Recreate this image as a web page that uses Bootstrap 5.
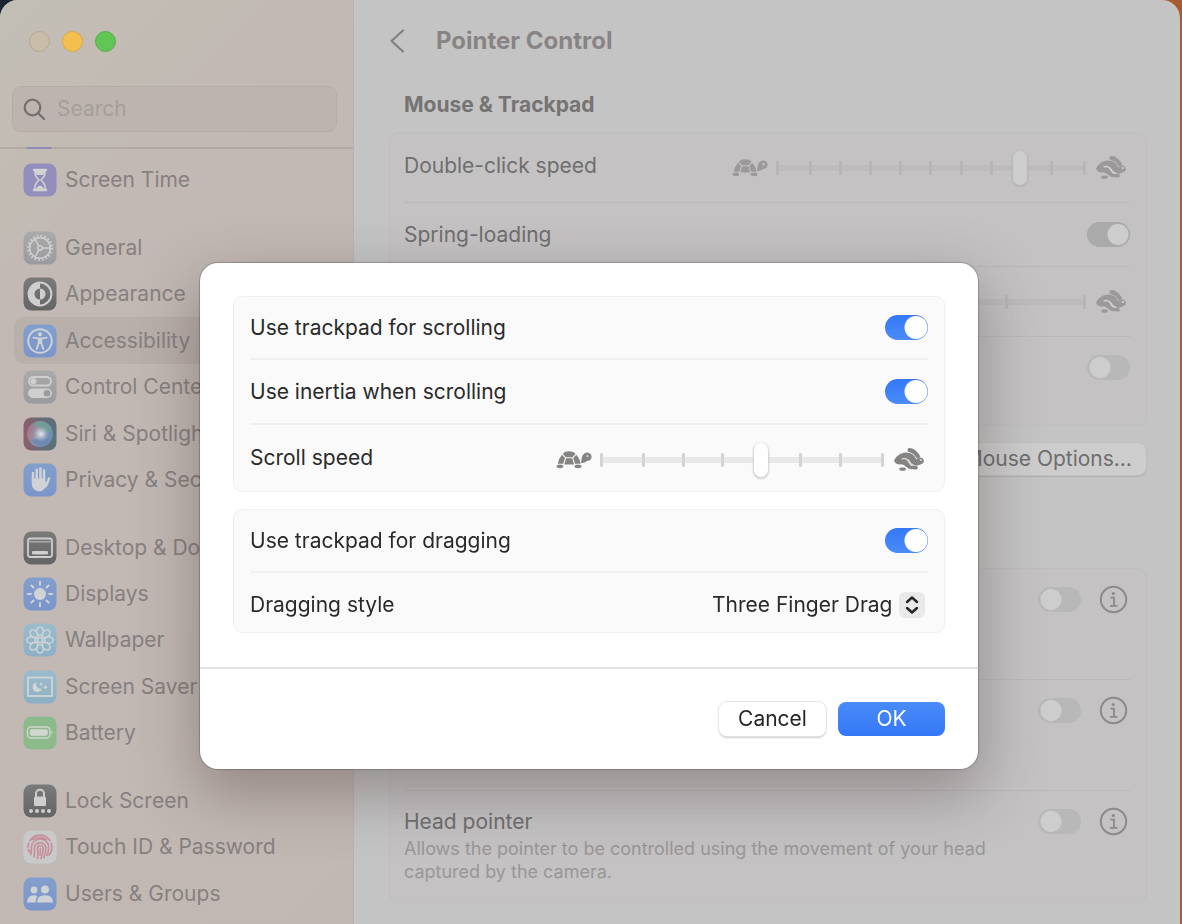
<!DOCTYPE html>
<html lang="en">
<head>
<meta charset="utf-8">
<meta name="viewport" content="width=device-width, initial-scale=1">
<title>Pointer Control</title>
<link href="https://cdn.jsdelivr.net/npm/bootstrap@5.3.0/dist/css/bootstrap.min.css" rel="stylesheet">
<style>
  body { font-family: Inter, "Liberation Sans", sans-serif; font-size: 21px; line-height: 26px; color: #6f6e6e; overflow: hidden; }
  .desktop { background: linear-gradient(90deg, #1c2433 0 40px, #a85a33 40px); }
  .window { height: 100vh; margin-right: 2px; border-radius: 18px 18px 0 0; overflow: hidden; background: #c4c4c4; }

  /* Sidebar */
  .sidebar { width: 30%; min-width: 300px; background: linear-gradient(135deg, #c2beb5 0, #c2bbb4 17%, #c2b9b4 22%, #c2b8b3 100%); border-right: 1px solid #bab2af; color: #868180; }
  .sidebar-head { height: 149px; border-bottom: 2px solid #b4aba8; padding: 31px 16px 15px 12px; }
  .lights { gap: 12px; padding-left: 17px; }
  .light { width: 21px; height: 21px; border-radius: 50%; border: 1px solid #b5a894; padding: 0; }
  .light-off { background: #c9bda9; }
  .light-min { background: #f5bf4f; border-color: #dba944; }
  .light-zoom { background: #62c655; border-color: #57ad4b; }
  .search { height: 46px; border-radius: 9px; border: 1px solid #b6adaa; background: #bdb4b0; padding: 0 10px; gap: 11px; }
  .search svg { width: 23px; height: 23px; flex: none; }
  .search input { background: none; border: 0; outline: 0; color: #6f6e6e; min-width: 0; padding: 0; }
  .search input::placeholder { color: #a69e9c; opacity: 1; }
  .side-list { padding: 8px 14px 7px; min-height: 0; position: relative; }
  .side-list::before { content: ""; position: absolute; left: 26px; top: -2px; width: 26px; height: 2px; border-radius: 0 0 4px 4px; background: #8f8cb8; }
  .side-item { color: inherit; text-decoration: none; gap: 8px; padding-left: 9px; border-radius: 10px; flex: 1 1 0; white-space: nowrap; }
  .side-item:hover { color: inherit; }
  .side-item.active { background: #b9afab; }
  .side-item.group-start { margin-top: 21px; }
  .side-item svg { width: 34px; height: 34px; flex: none; }

  /* Content */
  .content-pane { padding: 26px 33px 0 35px; min-width: 0; }
  .page-head { gap: 31px; height: 30px; }
  .back { border: 0; background: none; padding: 0; color: #858080; display: flex; }
  .page-title { font-size: 24px; line-height: 30px; font-weight: 700; color: #898484; margin: 0; }
  .section-title { font-size: 21px; line-height: 26px; font-weight: 700; color: #757373; margin: 36px 0 14px; padding-left: 15px; }
  .pane-group { background: #c4c2c3; border: 1px solid #c0bebf; border-radius: 10px; padding: 0 16px 0 14px; }
  .pane-row { border-bottom: 1px solid #bab9b9; }
  .pane-row:last-child { border-bottom: 0; }
  .row-speed { height: 70px; }
  .row-plain { height: 64px; }
  .row-tall { height: 88px; padding-top: 18px; }
  .row-note { height: 111px; padding-top: 16px; }
  .row-side { gap: 18px; margin-right: 2px; }
  .row-text { padding-top: 2px; }
  .note { font-size: 18px; line-height: 23px; color: #999797; max-width: 610px; margin-top: 2px; }
  .soft-btn { background: #cdcdcd; border: 1px solid #c0c0c0; border-radius: 9px; height: 34px; padding: 0 14px; line-height: 30px; color: #6f6e6e; box-shadow: 0 1px 1px #b0b0b0; margin: 16px 0 92px; }
  .info { border: 0; background: none; padding: 0; width: 29px; height: 29px; display: flex; color: #8b8989; }

  /* Switch */
  .form-check-input.toggle { width: 43px; height: 25px; margin: 0; border: 0; border-radius: 13px; flex: none; background: #b9b8b8 radial-gradient(circle at 13px 50%, #cdcdcd 10px, transparent 11px); box-shadow: none; }
  .form-check-input.toggle:checked { background: #aaa radial-gradient(circle at 31px 50%, #cdcdcd 10px, transparent 11px); }
  .modal .form-check-input.toggle:checked { background: radial-gradient(circle at 31px 50%, #fff 11px, transparent 12px), linear-gradient(#3478f6, #4a8cf8); }

  /* Speed slider */
  .speed { color: #9b9999; --tick: #b7b6b6; --track: #bdbbbc; --thumb: #cdcdcd; --edge: #b5b5b5; gap: 8px; }
  .modal .speed { color: #858483; --tick: #d4d4d4; --track: #e9e9e9; --thumb: #fff; --edge: #cfcfcf; }
  .rail { position: relative; width: 310px; height: 36px; }
  .modal .rail { width: 284px; }
  .ticks { position: absolute; inset: 11px 0; display: flex; justify-content: space-between; background: linear-gradient(var(--track), var(--track)) center / 100% 6px no-repeat; }
  .ticks i { width: 3px; border-radius: 1px; background: var(--tick); }
  .ticks i:first-child { margin-right: 3px; }
  .ticks i:last-child { margin-left: 3px; }
  .rail input { position: absolute; inset: 0; width: 100%; height: 100%; margin: 0; appearance: none; -webkit-appearance: none; background: none; }
  .rail input::-webkit-slider-thumb { -webkit-appearance: none; width: 14px; height: 34px; border-radius: 7px; background: var(--thumb); box-shadow: 0 1px 2px 1px var(--edge); }
  .critter { width: 36px; height: 26px; flex: none; }

  /* Dialog */
  .modal { padding-right: 4px; overflow: hidden; }
  .sheet { max-width: 778px; margin: 263px auto 0; }
  .modal .modal-content { border: 0; border-radius: 18px; color: #2a2a2a; box-shadow: 0 0 1px 1px rgba(0,0,0,.2), 0 22px 60px 4px rgba(60,40,40,.34); }
  .sheet-body { padding: 33px 33px 34px; gap: 17px; }
  .sheet-group { background: #fafafa; border: 1px solid #f0f0f0; border-radius: 9px; padding: 0 16px; }
  .sheet-row { height: 65px; border-bottom: 2px solid #f0f0f0; }
  .sheet-row:first-child { height: 63px; }
  .sheet-row:last-child { border-bottom: 0; height: 66px; }
  .sheet-row.tail:last-child { height: 59px; padding-top: 5px; }
  .sheet-foot { border-top: 2px solid #e4e4e4; padding: 33px; gap: 12px; }
  .sheet-foot button { width: 107px; height: 34px; border-radius: 8px; padding: 0; line-height: 26px; font-size: 21px; border: 0; }
  .btn-plain, .btn-plain:hover { background: #fff; color: #252525; box-shadow: 0 0 1px 1px #e4e4e4, 0 2px 2px #ccc; }
  .btn-main, .btn-main:hover { background: linear-gradient(#4a8cf8, #3377f7); color: #fff; }
  .picker { position: relative; margin-right: 3px; }
  .picker select { appearance: none; -webkit-appearance: none; border: 0; background: none; color: inherit; padding: 0 32px 0 0; }
  .picker svg { position: absolute; right: 0; top: 0; width: 26px; height: 26px; pointer-events: none; }
</style>
</head>
<body>
<!-- Shared icon shapes -->
<svg width="0" height="0" class="position-absolute" aria-hidden="true">
  <defs>
    <linearGradient id="gBlue" x2="0" y2="1"><stop stop-color="#829fcc"/><stop offset="1" stop-color="#7b95ca"/></linearGradient>
    <linearGradient id="gGrey" x2="0" y2="1"><stop stop-color="#aaaaaa"/><stop offset="1" stop-color="#9a9b9d"/></linearGradient>
    <linearGradient id="gDark" x2="0" y2="1"><stop stop-color="#7a7b79"/><stop offset="1" stop-color="#646464"/></linearGradient>
    <linearGradient id="gCyan" x2="0" y2="1"><stop stop-color="#9bbccb"/><stop offset="1" stop-color="#8cb0c4"/></linearGradient>
    <linearGradient id="gSiri"><stop stop-color="#8f5f6c"/><stop offset=".5" stop-color="#666977"/><stop offset="1" stop-color="#597376"/></linearGradient>
    <linearGradient id="gOrb" x2="1" y2=".4"><stop stop-color="#b0687a"/><stop offset=".5" stop-color="#8f96a8"/><stop offset="1" stop-color="#6a8cb5"/></linearGradient>
    <radialGradient id="gGlow"><stop stop-color="#e4e9ee"/><stop offset="1" stop-color="#c0c8d8" stop-opacity="0"/></radialGradient>
    <symbol id="turtle" viewBox="0 0 36 26"><g fill="currentColor"><path d="M6.800 7Q8.500 4.200 13 4.200Q17.800 4.200 19.500 7L16.500 10.200H9.800Z"/><path d="M6 7.800L9 11L7.300 16.800H1.800Q2.800 11 6 7.800ZM20.300 7.800Q23.500 11 24.700 16.800H19L17.300 11Z"/><path d="M10 11.200H16.300L18 17.500H8.300Z"/><path d="M25 15.800L25.800 10.500Q27 6 31 5.600Q35.600 6 35.600 10.300Q35 13.900 31 13.900Q28 16.500 25 15.800Z"/><ellipse cx="4" cy="19.300" rx="3.300" ry="1.900"/><ellipse cx="22" cy="19.300" rx="3.500" ry="1.900"/></g><circle cx="31.500" cy="9.200" r="1.100" fill="#d0d0d0"/></symbol>
    <symbol id="rabbit" viewBox="0 0 36 26"><g fill="none" stroke="currentColor" stroke-linecap="round" stroke-linejoin="round"><path d="M17.500 3.200Q22 3.500 26 9.500" stroke-width="4.200"/><path d="M7.500 13Q10 8.800 14.500 8.800Q19 8.800 21 13T28.500 14" stroke-width="6.500"/><path d="M14.500 17.500L18 20.300L24 20.800" stroke-width="3.600"/><path d="M9 22.100H12.200" stroke-width="3.400"/></g><path d="M2 13.500Q4 9 9 6.500L15 12.500L19 19.500L14.500 20Q11.500 16.500 7 17.500Q3 17 2 13.500Z" fill="currentColor"/><path d="M10 11.800Q14.500 10.600 16.200 14T21.500 18.200" fill="none" stroke="#d4d4d4" stroke-width="1.300" stroke-linecap="round"/><circle cx="28.800" cy="13" r="1.100" fill="#d4d4d4"/></symbol>
    <symbol id="info" viewBox="0 0 29 29"><circle cx="14.500" cy="14.500" r="12.700" fill="none" stroke="currentColor" stroke-width="2"/><circle cx="14.300" cy="8.500" r="1.600" fill="currentColor"/><path d="M11.500 12.600H15V20.500M11 20.800H18.500" fill="none" stroke="currentColor" stroke-width="1.800"/></symbol>
    <ellipse id="petal" cx="17" cy="8.300" rx="3.300" ry="4.300"/>
    <path id="ray" d="M17 4.800V7.800"/>
  </defs>
</svg>

<div class="desktop">
<div class="window d-flex">
  <aside class="sidebar d-flex flex-column flex-shrink-0">
    <div class="sidebar-head d-flex flex-column justify-content-between">
      <div class="lights d-flex">
        <button class="light light-off" aria-label="Close"></button>
        <button class="light light-min" aria-label="Minimise"></button>
        <button class="light light-zoom" aria-label="Zoom"></button>
      </div>
      <label class="search d-flex align-items-center">
        <svg viewBox="0 0 23 23" fill="none" stroke="#747070" stroke-width="2.300" stroke-linecap="round"><circle cx="9.500" cy="9.500" r="7.800"/><path d="M15.300 15.300L21 21"/></svg>
        <input type="text" placeholder="Search" aria-label="Search">
      </label>
    </div>
    <nav class="side-list d-flex flex-column flex-grow-1">
      <a href="#" class="side-item d-flex align-items-center">
        <svg viewBox="0 0 34 34"><rect x=".5" y=".5" width="33" height="33" rx="8" fill="#928fbd"/><path d="M11 7H23M11 27H23" stroke="#d2d2d2" stroke-width="2.400" stroke-linecap="round"/><path d="M12 7V10.500Q12 13 16 17Q12 21 12 23.500V27H22V23.500Q22 21 18 17Q22 13 22 10.500V7Z" fill="none" stroke="#d2d2d2" stroke-width="1.500"/><path d="M12 6H22V10L20 12H14L12 10ZM13 26.500Q14 23 17 22.500Q20 23 21 26.500Z" fill="#d2d2d2"/></svg>Screen Time</a>

      <a href="#" class="side-item group-start d-flex align-items-center">
        <svg viewBox="0 0 34 34"><rect x=".5" y=".5" width="33" height="33" rx="8" fill="url(#gGrey)"/><g fill="none" stroke="#cfcfcf" stroke-width="1.500"><circle cx="17" cy="17" r="10.300"/><circle cx="17" cy="17" r="2.200"/><path d="M19.200 17H27M15.900 15.100L12 8.300M15.900 18.900L12 25.700"/><circle cx="17" cy="17" r="12" stroke-width="2" stroke-dasharray="1.770 2"/></g></svg>General</a>
      <a href="#" class="side-item d-flex align-items-center">
        <svg viewBox="0 0 34 34"><rect x=".5" y=".5" width="33" height="33" rx="8" fill="url(#gDark)"/><circle cx="17" cy="17" r="11.400" fill="none" stroke="#cfcfcf" stroke-width="2"/><path d="M17 6A11 11 0 0 0 17 28V22.500A5.500 5.500 0 0 1 17 11.500Z" fill="#cfcfcf"/><path d="M17 11.500A5.500 5.500 0 0 1 17 22.500Z" fill="#cfcfcf"/></svg>Appearance</a>
      <a href="#" class="side-item active d-flex align-items-center" aria-current="page">
        <svg viewBox="0 0 34 34"><rect x=".5" y=".5" width="33" height="33" rx="8" fill="url(#gBlue)"/><circle cx="17" cy="17" r="11.800" fill="none" stroke="#cfd2d6" stroke-width="1.900"/><circle cx="17" cy="10.300" r="2" fill="#cfd2d6"/><path d="M10.500 13.600L15 14.400H19L23.500 13.600M17 14.500V19M15.700 15V19L13.700 25M18.300 15V19L20.300 25" fill="none" stroke="#cfd2d6" stroke-width="1.900" stroke-linecap="round" stroke-linejoin="round"/></svg>Accessibility</a>
      <a href="#" class="side-item d-flex align-items-center">
        <svg viewBox="0 0 34 34"><rect x=".5" y=".5" width="33" height="33" rx="8" fill="url(#gGrey)"/><rect x="6" y="7" width="22" height="8.500" rx="4.250" fill="none" stroke="#cfcfcf" stroke-width="1.800"/><circle cx="10.500" cy="11.200" r="3" fill="#cfcfcf"/><rect x="5" y="18.500" width="24" height="9.500" rx="4.750" fill="#cfcfcf"/><circle cx="24" cy="23.200" r="3.300" fill="#9b9b9c"/></svg>Control Center</a>
      <a href="#" class="side-item d-flex align-items-center">
        <svg viewBox="0 0 34 34"><rect x=".5" y=".5" width="33" height="33" rx="8" fill="url(#gSiri)"/><circle cx="17" cy="17" r="13" fill="url(#gOrb)"/><path d="M9 8Q18 0 26 9Q30 15 25 17Q20 10 9 8Z" fill="#6f9f92" opacity=".8"/><path d="M8 24Q17 33 26 24Q22 17 8 24Z" fill="#6d86b4" opacity=".8"/><circle cx="18" cy="17" r="8" fill="url(#gGlow)"/></svg>Siri &amp; Spotlight</a>
      <a href="#" class="side-item d-flex align-items-center">
        <svg viewBox="0 0 34 34"><rect x=".5" y=".5" width="33" height="33" rx="8" fill="url(#gBlue)"/><g stroke="#d0d3d6" stroke-width="2.500" stroke-linecap="round" fill="none"><path d="M10 10V18M13.700 6.700V17M17.400 5.500V17M21 7.500V17M26 15.500Q24.500 21 22.500 23.500"/></g><path d="M8.800 15.500H22.300V19.500L24 18Q22.500 28.500 16.500 28.500Q8.800 28 8.800 20Z" fill="#d0d3d6"/></svg>Privacy &amp; Security</a>

      <a href="#" class="side-item group-start d-flex align-items-center">
        <svg viewBox="0 0 34 34"><rect x=".5" y=".5" width="33" height="33" rx="8" fill="url(#gDark)"/><rect x="5" y="7.500" width="24" height="18.500" rx="2.500" fill="none" stroke="#cfcfcf" stroke-width="1.800"/><path d="M5.500 10.800H28.500" stroke="#aaa" stroke-width="1.500"/><rect x="9" y="20" width="16" height="3.500" rx="1" fill="#cfcfcf"/></svg>Desktop &amp; Dock</a>
      <a href="#" class="side-item d-flex align-items-center">
        <svg viewBox="0 0 34 34"><rect x=".5" y=".5" width="33" height="33" rx="8" fill="url(#gBlue)"/><circle cx="17" cy="17" r="6" fill="#d0d3d6"/><g stroke="#d0d3d6" stroke-width="2" stroke-linecap="round"><use href="#ray"/><use href="#ray" transform="rotate(45 17 17)"/><use href="#ray" transform="rotate(90 17 17)"/><use href="#ray" transform="rotate(135 17 17)"/><use href="#ray" transform="rotate(180 17 17)"/><use href="#ray" transform="rotate(225 17 17)"/><use href="#ray" transform="rotate(270 17 17)"/><use href="#ray" transform="rotate(315 17 17)"/></g></svg>Displays</a>
      <a href="#" class="side-item d-flex align-items-center">
        <svg viewBox="0 0 34 34"><rect x=".5" y=".5" width="33" height="33" rx="8" fill="url(#gCyan)"/><g fill="none" stroke="#d0d4d6" stroke-width="1.500"><use href="#petal"/><use href="#petal" transform="rotate(45 17 17)"/><use href="#petal" transform="rotate(90 17 17)"/><use href="#petal" transform="rotate(135 17 17)"/><use href="#petal" transform="rotate(180 17 17)"/><use href="#petal" transform="rotate(225 17 17)"/><use href="#petal" transform="rotate(270 17 17)"/><use href="#petal" transform="rotate(315 17 17)"/><circle cx="17" cy="17" r="2.600"/></g></svg>Wallpaper</a>
      <a href="#" class="side-item d-flex align-items-center">
        <svg viewBox="0 0 34 34"><rect x=".5" y=".5" width="33" height="33" rx="8" fill="url(#gCyan)"/><rect x="5" y="7.500" width="24" height="18.500" fill="none" stroke="#d0d4d6" stroke-width="1.800"/><path d="M13.500 12.500A4.800 4.800 0 1 0 19 18.500A4.500 4.500 0 0 1 13.500 12.500Z" fill="#d0d4d6"/><path d="M18 12L18.700 13.600L20.300 14.200L18.700 14.800L18 16.400L17.300 14.800L15.700 14.200L17.300 13.600ZM22.500 14.500L23.300 16.500L25 17.200L23.300 18L22.500 20L21.700 18L20 17.200L21.700 16.500Z" fill="#d0d4d6"/></svg>Screen Saver</a>
      <a href="#" class="side-item d-flex align-items-center">
        <svg viewBox="0 0 34 34"><rect x=".5" y=".5" width="33" height="33" rx="8" fill="#8dba8b"/><rect x="4.500" y="11" width="22.500" height="11" rx="3.500" fill="none" stroke="#ced6cd" stroke-width="1.400"/><rect x="6.800" y="13.200" width="18" height="6.600" rx="2" fill="#d2d6d1"/><path d="M28.500 14.500Q31 16.500 28.500 18.500Z" fill="#ced6cd"/></svg>Battery</a>

      <a href="#" class="side-item group-start d-flex align-items-center">
        <svg viewBox="0 0 34 34"><rect x=".5" y=".5" width="33" height="33" rx="8" fill="url(#gDark)"/><path d="M13 13V9.800A4 4 0 0 1 21 9.800V13" fill="none" stroke="#cfcfcf" stroke-width="2"/><rect x="11" y="12.500" width="12" height="9.500" rx="1.500" fill="#cfcfcf"/><g fill="#cfcfcf"><circle cx="8" cy="27" r="2"/><circle cx="14" cy="27" r="2"/><circle cx="20" cy="27" r="2"/><circle cx="26" cy="27" r="2"/></g></svg>Lock Screen</a>
      <a href="#" class="side-item d-flex align-items-center">
        <svg viewBox="0 0 34 34"><rect x=".5" y=".5" width="33" height="33" rx="8" fill="#cac9c9"/><g fill="none" stroke="#c68f97" stroke-width="1.700" stroke-linecap="round"><path d="M7 10.500A12 12 0 0 1 27 10.500M5 17Q5 15 5.800 13.300M28.200 13.300A12 12 0 0 1 26 25M6.500 22Q5.500 20 5.300 19.500M8 24.500Q8.500 20 8.300 17A8.900 8.900 0 0 1 25.500 15Q26.300 20 24 25.500M11 27Q12 22 11.300 18A5.900 5.900 0 0 1 22.800 17Q23 22 21 27.500M14.500 28.300Q15.500 23 14.400 18A2.900 2.900 0 0 1 20 17.500Q20.500 23 18 28.500M17.200 18.500Q17.500 22 17 25M10 9.500Q17 5 23.500 9.500"/></g></svg>Touch ID &amp; Password</a>
      <a href="#" class="side-item d-flex align-items-center">
        <svg viewBox="0 0 34 34"><rect x=".5" y=".5" width="33" height="33" rx="8" fill="url(#gBlue)"/><g fill="#d0d3d6"><circle cx="11" cy="13" r="3.400"/><path d="M4 25.500Q4 18.500 11 18.300Q13 18.300 14.500 19Q12.500 21.500 12.500 25.500Z"/><circle cx="22" cy="12.500" r="4"/><path d="M14 25.500Q14 18.300 22 18.300Q30 18.300 30 25.500Z"/></g></svg>Users &amp; Groups</a>
    </nav>
  </aside>

  <main class="content-pane flex-grow-1">
    <header class="page-head d-flex align-items-center">
      <button class="back" aria-label="Back"><svg width="16" height="26" viewBox="0 0 16 26" fill="none" stroke="currentColor" stroke-width="2.300" stroke-linecap="round" stroke-linejoin="round"><path d="M14 2.500L2.500 13L14 23.500"/></svg></button>
      <h1 class="page-title">Pointer Control</h1>
    </header>
    <h2 class="section-title">Mouse &amp; Trackpad</h2>

    <section class="pane-group">
      <div class="pane-row row-speed d-flex align-items-center justify-content-between">
        <label for="dbl" class="pb-1">Double-click speed</label>
        <div class="speed d-flex align-items-center">
          <svg class="critter"><use href="#turtle"/></svg>
          <div class="rail"><div class="ticks"><i></i><i></i><i></i><i></i><i></i><i></i><i></i><i></i><i></i><i></i><i></i></div><input id="dbl" type="range" min="0" max="10" value="8"></div>
          <svg class="critter"><use href="#rabbit"/></svg>
        </div>
      </div>
      <div class="pane-row row-plain d-flex align-items-center justify-content-between">
        <label for="spring">Spring-loading</label>
        <input id="spring" class="form-check-input toggle" type="checkbox" role="switch" checked>
      </div>
      <div class="pane-row row-speed d-flex align-items-center justify-content-end">
        <div class="speed d-flex align-items-center">
          <svg class="critter"><use href="#turtle"/></svg>
          <div class="rail"><div class="ticks"><i></i><i></i><i></i><i></i><i></i></div><input type="range" min="0" max="4" value="2" aria-label="Spring-loading speed"></div>
          <svg class="critter"><use href="#rabbit"/></svg>
        </div>
      </div>
      <div class="pane-row row-tall d-flex align-items-start justify-content-end">
        <input class="form-check-input toggle" type="checkbox" role="switch" aria-label="Ignore built-in trackpad">
      </div>
    </section>

    <div class="d-flex justify-content-end"><button class="soft-btn">Mouse Options…</button></div>

    <section class="pane-group">
      <div class="pane-row row-note d-flex justify-content-end">
        <div class="row-side d-flex align-items-center align-self-start">
          <input class="form-check-input toggle" type="checkbox" role="switch" aria-label="Mouse Keys">
          <button class="info" aria-label="About Mouse Keys"><svg width="29" height="29"><use href="#info"/></svg></button>
        </div>
      </div>
      <div class="pane-row row-note d-flex justify-content-end">
        <div class="row-side d-flex align-items-center align-self-start">
          <input class="form-check-input toggle" type="checkbox" role="switch" aria-label="Alternate pointer actions">
          <button class="info" aria-label="About alternate pointer actions"><svg width="29" height="29"><use href="#info"/></svg></button>
        </div>
      </div>
      <div class="pane-row row-note d-flex justify-content-between">
        <div class="row-text">
          <label for="head">Head pointer</label>
          <div class="note">Allows the pointer to be controlled using the movement of your head captured by the camera.</div>
        </div>
        <div class="row-side d-flex align-items-center align-self-start">
          <input id="head" class="form-check-input toggle" type="checkbox" role="switch">
          <button class="info" aria-label="About head pointer"><svg width="29" height="29"><use href="#info"/></svg></button>
        </div>
      </div>
    </section>
  </main>
</div>
</div>

<div class="modal d-block" role="dialog" aria-modal="true" aria-label="Trackpad options">
  <div class="modal-dialog sheet">
    <div class="modal-content">
      <div class="sheet-body d-flex flex-column">
        <div class="sheet-group">
          <div class="sheet-row d-flex align-items-center justify-content-between">
            <label for="scroll">Use trackpad for scrolling</label>
            <input id="scroll" class="form-check-input toggle" type="checkbox" role="switch" checked>
          </div>
          <div class="sheet-row d-flex align-items-center justify-content-between">
            <label for="inertia">Use inertia when scrolling</label>
            <input id="inertia" class="form-check-input toggle" type="checkbox" role="switch" checked>
          </div>
          <div class="sheet-row d-flex align-items-center justify-content-between">
            <label for="speed">Scroll speed</label>
            <div class="speed d-flex align-items-center pt-1">
              <svg class="critter"><use href="#turtle"/></svg>
              <div class="rail"><div class="ticks"><i></i><i></i><i></i><i></i><i></i><i></i><i></i><i></i></div><input id="speed" type="range" min="0" max="7" value="4"></div>
              <svg class="critter"><use href="#rabbit"/></svg>
            </div>
          </div>
        </div>
        <div class="sheet-group">
          <div class="sheet-row d-flex align-items-center justify-content-between">
            <label for="drag">Use trackpad for dragging</label>
            <input id="drag" class="form-check-input toggle" type="checkbox" role="switch" checked>
          </div>
          <div class="sheet-row tail d-flex align-items-center justify-content-between">
            <label for="style">Dragging style</label>
            <div class="picker">
              <select id="style"><option>Three Finger Drag</option></select>
              <svg viewBox="0 0 26 26"><rect width="26" height="26" rx="6" fill="#e9e9e9"/><path d="M8 10L13 5.500L18 10M8 16L13 20.500L18 16" fill="none" stroke="#252525" stroke-width="2.400" stroke-linecap="round" stroke-linejoin="round"/></svg>
            </div>
          </div>
        </div>
      </div>
      <div class="sheet-foot d-flex justify-content-end">
        <button class="btn btn-plain">Cancel</button>
        <button class="btn btn-main">OK</button>
      </div>
    </div>
  </div>
</div>
<script src="https://cdn.jsdelivr.net/npm/bootstrap@5.3.0/dist/js/bootstrap.bundle.min.js"></script>
</body>
</html>
